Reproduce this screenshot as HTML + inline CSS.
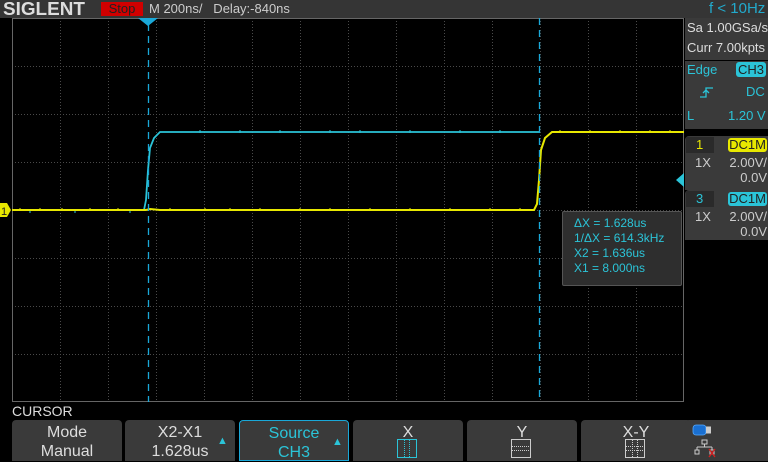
<!DOCTYPE html>
<html><head><meta charset="utf-8"><style>
*{margin:0;padding:0;box-sizing:border-box}
body{width:768px;height:461px;background:#000;position:relative;overflow:hidden;font-family:"Liberation Sans",sans-serif;}
.a{position:absolute;white-space:nowrap}
.btn{position:absolute;top:420px;height:41px;width:110px;background:#3a3a3a;border-radius:4px 4px 0 0;color:#ddd;font-size:16px;text-align:center;line-height:19px;padding-top:3px}
.pn{position:absolute;background:#3a3a3a}
</style></head><body>
<div class="a" style="left:0;top:0;width:768px;height:18px;background:#353535"></div>
<div class="a" style="left:3px;top:-1px;font-size:18px;font-weight:bold;color:#ddd;transform:scaleX(1.05);transform-origin:left">SIGLENT</div>
<div class="a" style="left:101px;top:2px;width:42px;height:14px;background:#d10000;color:#222;font-size:13px;line-height:14px;text-align:center">Stop</div>
<div class="a" style="left:149px;top:1px;font-size:13px;color:#ccc">M 200ns/&nbsp;&nbsp; Delay:-840ns</div>
<div class="a" style="left:709px;top:0px;font-size:15px;color:#22aacc">f &lt; 10Hz</div>
<svg class="a" style="left:0;top:0" width="685" height="410">
<g stroke="#4a4a4a" stroke-width="1" stroke-dasharray="1,2">
<line x1="60.5" y1="18" x2="60.5" y2="402"/><line x1="108.5" y1="18" x2="108.5" y2="402"/><line x1="156.5" y1="18" x2="156.5" y2="402"/><line x1="204.5" y1="18" x2="204.5" y2="402"/><line x1="252.5" y1="18" x2="252.5" y2="402"/><line x1="300.5" y1="18" x2="300.5" y2="402"/><line x1="348.5" y1="18" x2="348.5" y2="402"/><line x1="396.5" y1="18" x2="396.5" y2="402"/><line x1="444.5" y1="18" x2="444.5" y2="402"/><line x1="492.5" y1="18" x2="492.5" y2="402"/><line x1="540.5" y1="18" x2="540.5" y2="402"/><line x1="588.5" y1="18" x2="588.5" y2="402"/><line x1="636.5" y1="18" x2="636.5" y2="402"/>
<line x1="12" y1="66.5" x2="684" y2="66.5"/><line x1="12" y1="114.5" x2="684" y2="114.5"/><line x1="12" y1="162.5" x2="684" y2="162.5"/><line x1="12" y1="210.5" x2="684" y2="210.5"/><line x1="12" y1="258.5" x2="684" y2="258.5"/><line x1="12" y1="306.5" x2="684" y2="306.5"/><line x1="12" y1="354.5" x2="684" y2="354.5"/>
</g>
<rect x="12.5" y="18.5" width="671" height="383" fill="none" stroke="#666"/>
<polyline fill="none" stroke="#2bc4d8" stroke-width="1.8" points="12,210 144,210 146,200 148,170 150,148 154,138 160,132 540,132"/>
<g stroke="#2bc4d8" stroke-width="1"><path d="M200 130v3M240 130v3M280 130v3M330 130v3M360 130v3M410 130v3M460 130v3M500 130v3M30 209v4M75 209v4M130 209v4"/></g>
<polyline fill="none" stroke="#e8e800" stroke-width="2" points="12,210 146,210 150,209 160,210 534,210 537,204 539,180 541,150 545,138 552,132 684,132"/>
<g stroke="#e8e800" stroke-width="1"><path d="M20 208v3M40 208v3M62 208v3M90 208v3M118 208v3M170 208v3M205 208v3M230 208v3M260 208v3M300 208v3M330 208v3M370 208v3M410 208v3M450 208v3M490 208v3M520 208v3M560 130v3M590 130v3M620 130v3M650 130v3M670 130v3"/></g>
<g stroke="#1aa8d8" stroke-width="1.3" stroke-dasharray="7,5"><line x1="148.5" y1="24" x2="148.5" y2="402"/><line x1="539.5" y1="18" x2="539.5" y2="402"/></g>
<polygon points="138,18 158,18 148,26" fill="#1aa8d8"/>
<polygon points="0,203 7,203 11,210 7,217 0,217" fill="#e8e800"/>
<text x="1" y="215" font-size="11" fill="#222" font-family="Liberation Sans">1</text>
<polygon points="684,173 684,187 676,180" fill="#2bc4d8"/>
</svg>
<div class="a" style="left:562px;top:211px;width:120px;height:75px;background:#2e2e2e;border:1px solid #555;border-radius:2px;color:#2bc4d8;font-size:12px;line-height:15px;padding:4px 0 0 11px">ΔX = 1.628us<br>1/ΔX = 614.3kHz<br>X2 = 1.636us<br>X1 = 8.000ns</div>
<div class="pn" style="left:685px;top:18px;width:83px;height:42px"></div>
<div class="a" style="left:687px;top:18px;font-size:13px;color:#ddd;line-height:20px">Sa 1.00GSa/s<br>Curr 7.00kpts</div>
<div class="pn" style="left:685px;top:61px;width:83px;height:68px"></div>
<div class="a" style="left:687px;top:62px;font-size:13px;color:#2bc4d8">Edge</div>
<div class="a" style="left:736px;top:62px;width:30px;height:15px;background:#2bc4d8;border-radius:3px;color:#222;font-size:13px;line-height:15px;text-align:center">CH3</div>
<svg class="a" style="left:700px;top:86px" width="14" height="12"><path d="M0 11H6V2H13M3 7L6 4L9 7" stroke="#2bc4d8" fill="none" stroke-width="1.3"/></svg>
<div class="a" style="left:746px;top:84px;font-size:13px;color:#2bc4d8">DC</div>
<div class="a" style="left:687px;top:108px;font-size:13px;color:#2bc4d8">L</div>
<div class="a" style="left:728px;top:108px;font-size:13px;color:#2bc4d8">1.20 V</div>
<div class="pn" style="left:685px;top:136px;width:83px;height:54px;border-top-left-radius:4px"></div>
<div class="a" style="left:686px;top:137px;width:28px;height:16px;background:#2a2a2a;color:#e8e800;font-size:13px;padding-left:10px">1</div>
<div class="a" style="left:728px;top:138px;width:39px;height:14px;background:#e8e800;border-radius:3px;color:#222;font-size:13px;line-height:14px;text-align:center">DC1M</div>
<div class="a" style="left:695px;top:155px;font-size:13px;color:#ccc">1X</div>
<div class="a" style="left:729px;top:155px;font-size:13px;color:#ccc;line-height:15px;text-align:right;width:38px">2.00V/<br>0.0V</div>
<div class="pn" style="left:685px;top:190px;width:83px;height:50px;border-top-left-radius:4px"></div>
<div class="a" style="left:686px;top:191px;width:28px;height:16px;background:#2a2a2a;color:#2bc4d8;font-size:13px;padding-left:10px">3</div>
<div class="a" style="left:728px;top:192px;width:39px;height:14px;background:#2bc4d8;border-radius:3px;color:#222;font-size:13px;line-height:14px;text-align:center">DC1M</div>
<div class="a" style="left:695px;top:209px;font-size:13px;color:#ccc">1X</div>
<div class="a" style="left:729px;top:209px;font-size:13px;color:#ccc;line-height:15px;text-align:right;width:38px">2.00V/<br>0.0V</div>
<div class="a" style="left:12px;top:403px;font-size:14px;color:#ddd">CURSOR</div>
<div class="btn" style="left:12px">Mode<br>Manual</div>
<div class="btn" style="left:125px">X2-X1<br>1.628us<span class="a" style="left:92px;top:12px;color:#2bc4d8;font-size:11px">▲</span></div>
<div class="btn" style="left:239px;border:1px solid #1aa8d8;color:#2bc4d8">Source<br>CH3<span class="a" style="left:92px;top:12px;color:#2bc4d8;font-size:11px">▲</span></div>
<div class="btn" style="left:353px">X</div>
<div class="btn" style="left:467px">Y</div>
<div class="btn" style="left:581px">X-Y</div>
<svg class="a" style="left:397px;top:439px" width="20" height="19"><rect x=".5" y=".5" width="19" height="18" fill="none" stroke="#2bc4d8"/><path d="M7.5 1v17M12.5 1v17" stroke="#2bc4d8" stroke-dasharray="1,1"/></svg>
<svg class="a" style="left:511px;top:439px" width="20" height="19"><rect x=".5" y=".5" width="19" height="18" fill="none" stroke="#ccc"/><path d="M1 7.5h18M1 11.5h18" stroke="#ccc" stroke-dasharray="1,1"/></svg>
<svg class="a" style="left:625px;top:439px" width="20" height="19"><rect x=".5" y=".5" width="19" height="18" fill="none" stroke="#ccc"/><path d="M1 7.5h18M1 11.5h18M7.5 1v17M12.5 1v17" stroke="#ccc" stroke-dasharray="1,1"/></svg>
<div class="pn" style="left:685px;top:420px;width:83px;height:41px;border-radius:4px 0 0 0"></div>
<svg class="a" style="left:692px;top:424px" width="30" height="36"><rect x="1" y="1" width="13" height="10" rx="3" fill="#1a6fd0" stroke="#5af" stroke-width=".8"/><rect x="14" y="2.5" width="5" height="7" fill="#ccc"/><path d="M10 16h5v4h-5zM12.5 20v3M5 23h15M5 23v3M20 23v3M3 26h4v4H3zM18 26h4v4h-4z" fill="none" stroke="#ccc"/><path d="M17 25l6 8M23 25l-6 8" stroke="#d02020" stroke-width="1.4"/></svg>
</body></html>
